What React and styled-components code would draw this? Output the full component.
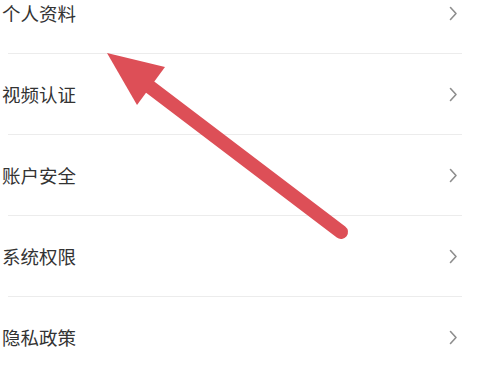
import React from "react";
import styled, { createGlobalStyle } from "styled-components";

const Global = createGlobalStyle`
  html, body { margin: 0; padding: 0; background: #fff; }
  body { font-family: "Noto Sans CJK SC", "Noto Sans", sans-serif; overflow: hidden; }
`;

const Page = styled.div`
  position: relative;
  width: 480px;
  height: 373px;
  overflow: hidden;
  background: #fff;
`;

const List = styled.ul`
  list-style: none;
  margin: -27px 0 0 0;
  padding: 0;
  display: flex;
  flex-direction: column;
`;

const Item = styled.li`
  display: flex;
  flex-direction: column;
`;

const Row = styled.div`
  height: 80px;
  display: flex;
  align-items: center;
  justify-content: space-between;
  padding: 0 22px 0 2px;
`;

const Label = styled.span`
  font-size: 18.5px;
  color: #333;
  letter-spacing: 0;
`;

const Divider = styled.div`
  height: 1px;
  margin: 0 18px 0 8px;
  background: #ececec;
`;

const Chevron = () => (
  <svg width="9" height="15" viewBox="0 0 9 15" fill="none">
    <path d="M1.5 1.5 L7 7.5 L1.5 13.5" stroke="#8e8e8e" strokeWidth="1.6" strokeLinecap="round" strokeLinejoin="round" />
  </svg>
);

const Overlay = styled.svg`
  position: absolute;
  left: 0;
  top: 0;
  pointer-events: none;
`;

const items = ["个人资料", "视频认证", "账户安全", "系统权限", "隐私政策"];

export default function App() {
  return (
    <Page>
      <Global />
      <List>
        {items.map((t, i) => (
          <Item key={t}>
            <Row>
              <Label>{t}</Label>
              <Chevron />
            </Row>
            {i < items.length - 1 && <Divider />}
          </Item>
        ))}
      </List>
      <Overlay width="480" height="373" viewBox="0 0 480 373">
        <line x1="150" y1="87" x2="341" y2="232" stroke="#dd4f57" strokeWidth="14" strokeLinecap="round" />
        <polygon points="107,53 165,67 137,105" fill="#dd4f57" />
      </Overlay>
    </Page>
  );
}
